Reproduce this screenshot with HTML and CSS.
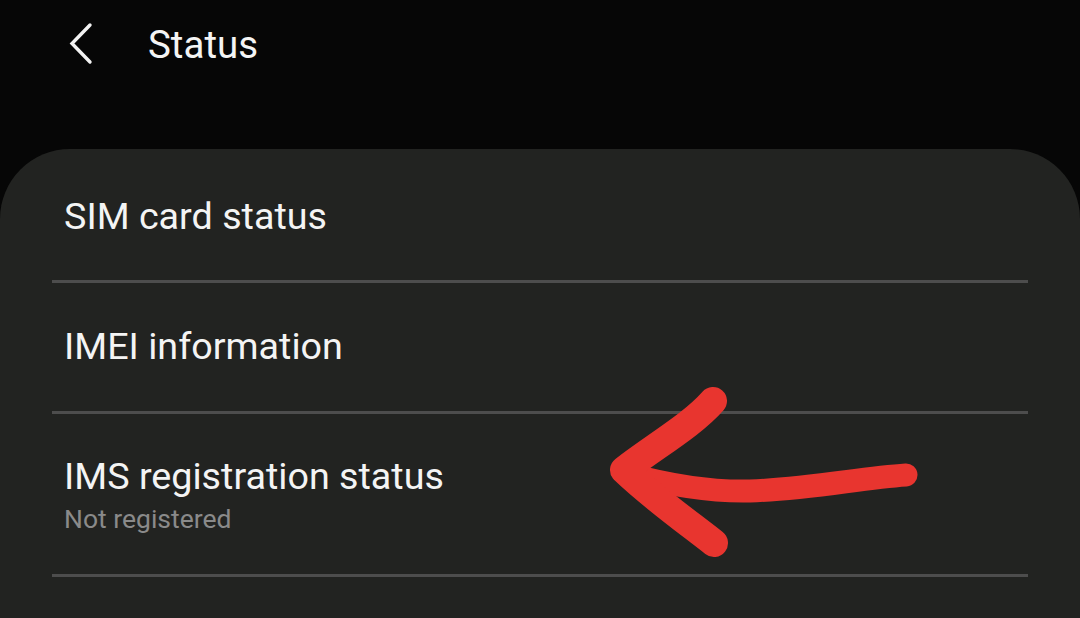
FILE: index.html
```html
<!DOCTYPE html>
<html lang="en">
<head>
    <meta charset="UTF-8">
    <meta name="viewport" content="width=device-width, initial-scale=1.0">
    <title>Status</title>
    <link rel="stylesheet" href="styles.css">
</head>
<body>
    <div class="topbar">
        <svg class="back" width="40" height="48" viewBox="0 0 40 48">
            <path d="M27 5 L9 23.5 L27 42" fill="none" stroke="#f2f2f2" stroke-width="3.4" stroke-linecap="round" stroke-linejoin="miter"/>
        </svg>
        <h1>Status</h1>
    </div>

    <div class="card">
        <div class="row row-first">
            <div class="title">SIM card status</div>
        </div>
        <div class="divider"></div>
        <div class="row">
            <div class="title">IMEI information</div>
        </div>
        <div class="divider"></div>
        <div class="row row-tall">
            <div class="title">IMS registration status</div>
            <div class="sub">Not registered</div>
        </div>
        <div class="divider"></div>

        <!-- red hand-drawn arrow over the list -->
        <svg class="arrow" width="1080" height="469" viewBox="0 149 1080 469">
            <g fill="none" stroke="#e8352f" stroke-linecap="round" stroke-linejoin="round">
                <path d="M906 475 C 860 478, 810 489, 750 491 C 705 492, 665 484, 628 474" stroke-width="23"/>
                <path d="M713 401 C 692 425, 655 446, 624 470 C 652 497, 690 524, 714 543" stroke-width="28"/>
            </g>
        </svg>
    </div>
</body>
</html>
```

FILE: styles.css
```css
body {
    margin: 0;
    background: #060606;
    font-family: Roboto, "Noto Sans", Arial, sans-serif;
    color: #f4f4f4;
    height: 618px;
    overflow: hidden;
}
.topbar {
    height: 149px;
    display: flex;
    align-items: flex-start;
    padding-top: 20px;
    box-sizing: border-box;
}
.back {
    margin-left: 63px;
}
.topbar h1 {
    margin: 0 0 0 45px;
    font-size: 38.5px;
    font-weight: 400;
    line-height: 50px;
}
.card {
    position: relative;
    background: #222321;
    border-radius: 70px 70px 0 0;
    height: 469px;
}
.row {
    height: 128px;
    padding-left: 64px;
    padding-bottom: 3px;
    display: flex;
    flex-direction: column;
    justify-content: center;
    box-sizing: border-box;
}
.row-first {
    height: 131px;
    padding-top: 3px;
    padding-bottom: 0;
}
.row-tall {
    height: 160px;
    padding-bottom: 0;
}
.title {
    font-size: 37.7px;
    line-height: 44px;
}
.sub {
    font-size: 26.5px;
    color: #8a8a8a;
    line-height: 30px;
    margin-top: 6px;
}
.divider {
    height: 3px;
    background: #4d4d4d;
    margin: 0 52px;
}
.arrow {
    position: absolute;
    left: 0;
    top: 0;
}
```
